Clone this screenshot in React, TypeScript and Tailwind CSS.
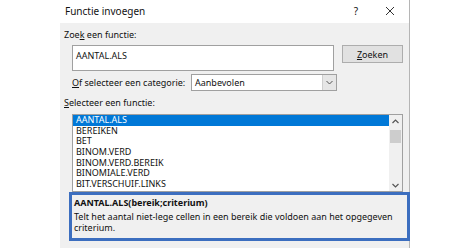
export default function App() {
  const rows = [
    "AANTAL.ALS",
    "BEREIKEN",
    "BET",
    "BINOM.VERD",
    "BINOM.VERD.BEREIK",
    "BINOMIALE.VERD",
    "BIT.VERSCHUIF.LINKS",
  ];

  return (
    <div
      className="w-[474px] h-[248px] bg-white overflow-hidden text-[#111] text-[9px] leading-none"
      style={{ fontFamily: '"Noto Sans", "Open Sans", sans-serif' }}
    >
      <div className="ml-[60px] w-[350px] h-[248px] flex flex-col border-r border-[#b5b5b5]">
        {/* Title bar */}
        <div className="h-[23px] bg-white flex items-center pl-[5px] pr-[14px] shrink-0">
          <span className="text-[10px] mt-[-2px]">Functie invoegen</span>
          <span className="ml-auto text-[10px] mt-[-2px] mr-[27px]">?</span>
          <svg width="10" height="10" viewBox="0 0 10 10" className="mt-[-2px]">
            <path d="M1 1L9 9M9 1L1 9" stroke="#333" strokeWidth="1" />
          </svg>
        </div>

        {/* Body */}
        <div className="flex-1 bg-[#f0f0f0] flex flex-col pl-[4px]">
          <div className="h-[22px] flex items-center">
            Zoe<span className="underline">k</span>&nbsp;een functie:
          </div>

          <div className="flex items-start pl-[8px]">
            <div className="w-[262px] h-[26px] bg-white border border-[#a0a0a0] pl-[3px] pt-[5px]">
              AANTAL.ALS
            </div>
            <div className="ml-[8px] w-[61px] h-[18px] bg-[#e1e1e1] border border-[#adadad] flex items-center justify-center">
              <span className="underline">Z</span>oeken
            </div>
          </div>

          <div className="flex items-center pl-[8px] mt-[3px] h-[17px]">
            <span>
              <span className="underline">O</span>f selecteer een categorie:
            </span>
            <div className="ml-auto mr-[72px] w-[146px] h-[17px] bg-white border border-[#a0a0a0] flex items-center">
              <span className="pl-[3px]">Aanbevolen</span>
              <div className="ml-auto w-[14px] h-full bg-[#e6e6e6] border-l border-[#cfcfcf] flex items-center justify-center">
                <svg width="7" height="5" viewBox="0 0 7 5">
                  <path d="M0.5 1L3.5 4L6.5 1" fill="none" stroke="#555" strokeWidth="1" />
                </svg>
              </div>
            </div>
          </div>

          <div className="h-[23px] flex items-center">
            <span className="underline">S</span>electeer een functie:
          </div>

          <div className="ml-[8px] mr-[6px] h-[78px] bg-white border border-[#a0a0a0] flex">
            <div className="flex-1 flex flex-col">
              {rows.map((r, i) => (
                <div
                  key={r}
                  className={
                    i === 0
                      ? "h-[10.7px] leading-[10.7px] bg-[#0078d7] text-white pl-[3px]"
                      : "h-[10.7px] leading-[10.7px] pl-[3px]"
                  }
                >
                  {r}
                </div>
              ))}
            </div>
            <div className="w-[13px] bg-[#f0f0f0] flex flex-col items-center">
              <div className="h-[12px] flex items-center">
                <svg width="7" height="5" viewBox="0 0 7 5">
                  <path d="M0.5 4L3.5 1L6.5 4" fill="none" stroke="#555" strokeWidth="1.2" />
                </svg>
              </div>
              <div className="w-[11px] h-[13px] bg-[#cdcdcd] mt-[3px]" />
              <div className="mt-auto h-[12px] flex items-center">
                <svg width="7" height="5" viewBox="0 0 7 5">
                  <path d="M0.5 1L3.5 4L6.5 1" fill="none" stroke="#555" strokeWidth="1.2" />
                </svg>
              </div>
            </div>
          </div>

          <div className="ml-[5px] mr-[-1px] h-[49px] border-[3px] border-[#3c6ebf] bg-[#f0f0f0] px-[2px] pt-[3px]">
            <div className="font-bold">AANTAL.ALS(bereik;criterium)</div>
            <div className="mt-[4px] leading-[11px]">
              Telt het aantal niet-lege cellen in een bereik die voldoen aan het opgegeven criterium.
            </div>
          </div>
        </div>
      </div>
    </div>
  );
}
